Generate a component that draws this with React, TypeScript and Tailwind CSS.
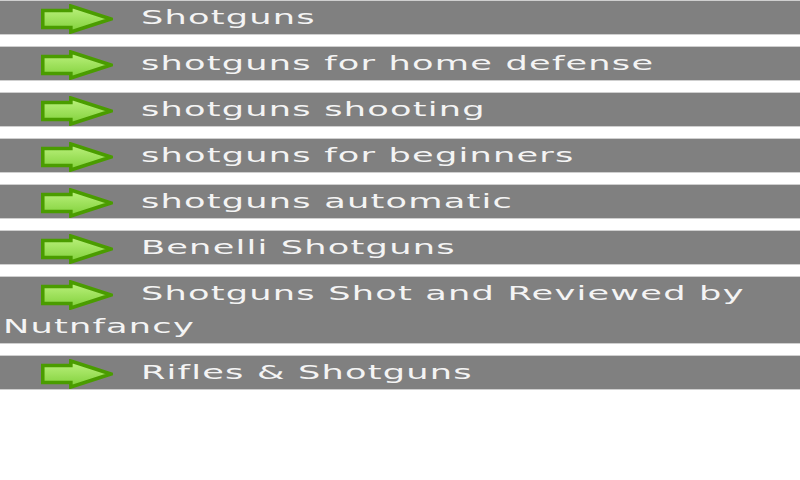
import React from 'react'

const items = [
  'Shotguns',
  'shotguns for home defense',
  'shotguns shooting',
  'shotguns for beginners',
  'shotguns automatic',
  'Benelli Shotguns',
  'Shotguns Shot and Reviewed by Nutnfancy',
  'Rifles & Shotguns',
]

function Arrow() {
  return (
    <svg
      className="inline-block align-middle ml-[20.5px] mr-[15px] w-[39px] h-[30px]"
      viewBox="0 0 72 30"
      preserveAspectRatio="none"
    >
      <defs>
        <linearGradient id="ag" x1="0" y1="0" x2="0" y2="1">
          <stop offset="0" stopColor="#bdf27f" />
          <stop offset="1" stopColor="#80d03a" />
        </linearGradient>
      </defs>
      <path
        d="M2 6.5 H30 V2 L70 15 L30 28 V23.5 H2 Z"
        fill="url(#ag)"
        stroke="#4a9c00"
        strokeWidth="3.6"
        strokeLinejoin="miter"
      />
    </svg>
  )
}

export default function App() {
  return (
    <div className="w-[800px] h-[480px] bg-white overflow-hidden">
      <div className="w-[432px] origin-left scale-x-[1.852]">
        {items.map((item) => (
          <div
            key={item}
            className="bg-[#808080] border-y border-[#cfcfcf] mb-[11px] pl-[1.6px] text-[19px] leading-[33px] tracking-[0.65px] text-[#f4f4f4]"
            style={{ fontFamily: '"DejaVu Sans", sans-serif' }}
          >
            <Arrow />
            {item}
          </div>
        ))}
      </div>
    </div>
  )
}
